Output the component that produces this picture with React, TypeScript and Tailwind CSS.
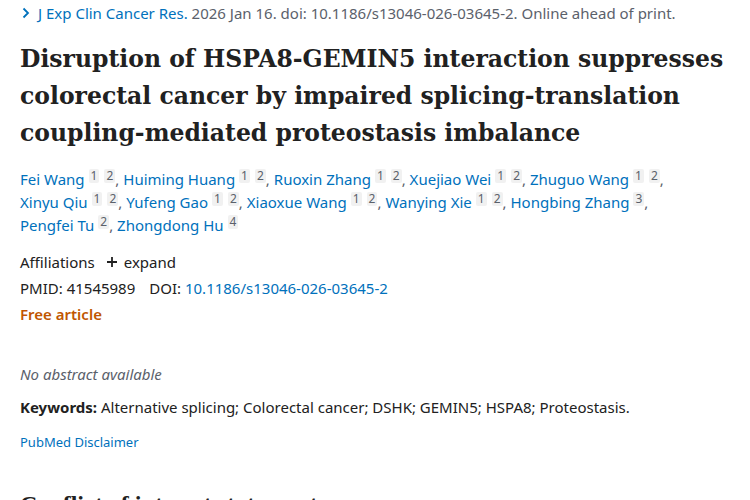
import React from 'react';

interface Author {
  name: string;
  refs: string[];
}

const authors: Author[] = [
  { name: 'Fei Wang', refs: ['1', '2'] },
  { name: 'Huiming Huang', refs: ['1', '2'] },
  { name: 'Ruoxin Zhang', refs: ['1', '2'] },
  { name: 'Xuejiao Wei', refs: ['1', '2'] },
  { name: 'Zhuguo Wang', refs: ['1', '2'] },
  { name: 'Xinyu Qiu', refs: ['1', '2'] },
  { name: 'Yufeng Gao', refs: ['1', '2'] },
  { name: 'Xiaoxue Wang', refs: ['1', '2'] },
  { name: 'Wanying Xie', refs: ['1', '2'] },
  { name: 'Hongbing Zhang', refs: ['3'] },
  { name: 'Pengfei Tu', refs: ['2'] },
  { name: 'Zhongdong Hu', refs: ['4'] },
];

const sans = "font-['Noto_Sans',sans-serif]";

const App: React.FC = () => {
  return (
    <div className={`w-[750px] h-[500px] overflow-hidden bg-white px-5 ${sans}`}>
      {/* journal line */}
      <div className="flex items-center pt-[3px] text-[15px] leading-[20px] text-[#5b616b]">
        <svg width="10" height="12" viewBox="0 0 10 12" className="mr-[7px] ml-[1px]">
          <path d="M2.5 1.5 L7 6 L2.5 10.5" fill="none" stroke="#0071bc" strokeWidth="1.8" />
        </svg>
        <span className="text-[#0071bc]">J Exp Clin Cancer Res.</span>
        <span>&nbsp;2026 Jan 16. doi: 10.1186/s13046-026-03645-2. Online ahead of print.</span>
      </div>

      {/* title */}
      <h1 className="mt-[18px] font-['DejaVu_Serif',serif] text-[23.5px] font-bold leading-[37px] text-[#212121]">
        Disruption of HSPA8-GEMIN5 interaction suppresses colorectal cancer by impaired
        splicing-translation coupling-mediated proteostasis imbalance
      </h1>

      {/* authors */}
      <div className="mt-[16px] text-[15px] leading-[23px] text-[#0071bc]">
        {authors.map((a, i) => (
          <React.Fragment key={a.name}>
            <span className="whitespace-nowrap">
              <span>{a.name}</span>
              {a.refs.map((r, j) => (
                <span
                  key={r}
                  className={`${j === 0 ? 'ml-[4px]' : 'ml-[5px]'} inline-block rounded-[2px] bg-[#f1f1f1] px-[2px] align-[5px] text-[12px] leading-[14px] text-[#5b616b]`}
                >
                  {r}
                </span>
              ))}
              <span className="text-[#5b616b]">{i < authors.length - 1 ? ',' : ''}</span>
            </span>{' '}
          </React.Fragment>
        ))}
      </div>

      {/* meta */}
      <div className="mt-[12px] text-[15px] leading-[26px] text-[#212121]">
        <div className="flex items-center">
          <span>Affiliations</span>
          <svg width="12" height="12" viewBox="0 0 12 12" className="ml-[11px] mr-[6px]">
            <path d="M6 1 V11 M1 6 H11" stroke="#212121" strokeWidth="1.8" />
          </svg>
          <span>expand</span>
        </div>
        <div>
          <span>PMID: 41545989</span>
          <span className="ml-[14px]">DOI: </span>
          <span className="text-[#0071bc]">10.1186/s13046-026-03645-2</span>
        </div>
        <div className="font-semibold text-[#c05600]">Free article</div>
      </div>

      <div className="mt-[37px] text-[15px] italic leading-[20px] text-[#5b616b]">No abstract available</div>

      <div className="mt-[13px] text-[15px] leading-[20px] text-[#212121]">
        <span className="font-bold">Keywords:</span> Alternative splicing; Colorectal cancer; DSHK; GEMIN5;
        HSPA8; Proteostasis.
      </div>

      <div className="mt-[16px] text-[13px] leading-[18px] text-[#0071bc]">PubMed Disclaimer</div>

      <h2 className="mt-[39px] font-['Liberation_Serif',serif] text-[24px] font-bold leading-[28px] text-[#212121]">
        Conflict of interest statement
      </h2>
    </div>
  );
};

export default App;
